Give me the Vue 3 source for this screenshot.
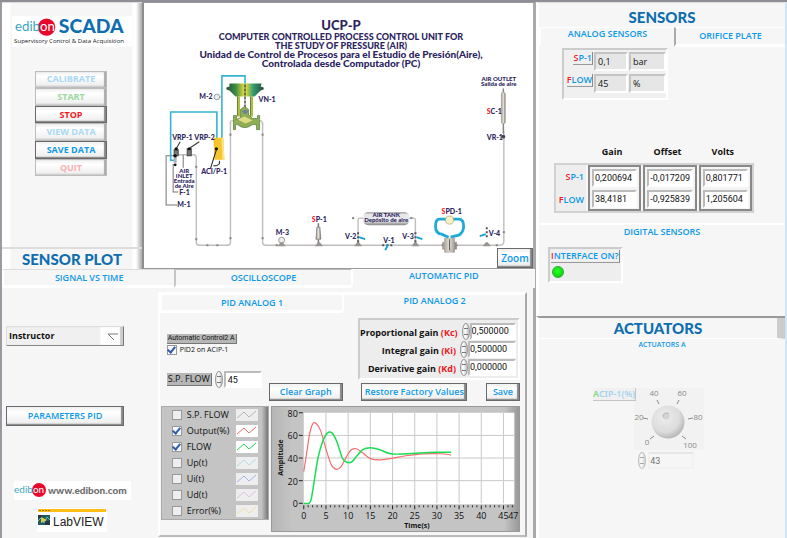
<script setup>
import { ref } from 'vue'

const commands = [
  { text: 'CALIBRATE', tone: 'sky' },
  { text: 'START', tone: 'green' },
  { text: 'STOP', tone: 'red', active: true },
  { text: 'VIEW DATA', tone: 'sky' },
  { text: 'SAVE DATA', tone: 'blue', active: true },
  { text: 'QUIT', tone: 'pink' },
]

const heading = [
  { y: 30, size: 13, text: 'UCP-P' },
  { y: 40, size: 9, text: 'COMPUTER CONTROLLED PROCESS CONTROL UNIT FOR' },
  { y: 49, size: 9, text: 'THE STUDY OF PRESSURE (AIR)' },
  { y: 58, size: 10, text: 'Unidad de Control de Procesos para el Estudio de Presión(Aire),' },
  { y: 67, size: 10, text: 'Controlada desde Computador (PC)' },
]

const tags = [
  { x: 199, y: 99, text: 'M-2' },
  { x: 258, y: 101, text: 'VN-1' },
  { x: 172, y: 139, text: 'VRP-1' },
  { x: 194, y: 139, text: 'VRP-2' },
  { x: 201, y: 173, text: 'ACI/P-1' },
  { x: 179, y: 194, text: 'F-1' },
  { x: 177, y: 206, text: 'M-1' },
  { x: 275, y: 234, text: 'M-3' },
  { x: 344, y: 238, text: 'V-2' },
  { x: 382, y: 242, text: 'V-1' },
  { x: 401, y: 238, text: 'V-3' },
  { x: 487, y: 235, text: 'V-4' },
  { x: 485, y: 139, text: 'VR-1' },
]
const sensorTags = [
  { x: 311, y: 221, head: 'S', tail: 'P-1' },
  { x: 440, y: 213, head: 'S', tail: 'PD-1' },
  { x: 485, y: 113, head: 'S', tail: 'C-1' },
]
const joints = [
  [230, 134], [230, 237], [196, 166], [196, 238], [262, 134], [262, 237], [207, 244], [217, 244],
  [276, 244], [352, 217], [410, 217], [441, 244], [455, 244], [495, 244], [502, 231],
]

const readings = [
  { id: 'sp1', head: 'S', tail: 'P-1', value: '0,1', unit: 'bar' },
  { id: 'flow', head: 'F', tail: 'LOW', value: '45', unit: '%' },
]
const calibration = [
  { head: 'S', tail: 'P-1', values: ['0,200694', '-0,017209', '0,801771'] },
  { head: 'F', tail: 'LOW', values: ['38,4181', '-0,925839', '1,205604'] },
]

const gains = ref([
  { id: 'kc', name: 'Proportional gain', code: '(Kc)', value: '0,500000' },
  { id: 'ki', name: 'Integral gain', code: '(Ki)', value: '0,500000' },
  { id: 'kd', name: 'Derivative gain', code: '(Kd)', value: '0,000000' },
])

const traces = ref([
  { text: 'S.P. FLOW', color: '#b5b5b5', on: false },
  { text: 'Output(%)', color: '#f46a6a', on: true },
  { text: 'FLOW', color: '#1fdc55', on: true },
  { text: 'Up(t)', color: '#b4dcec', on: false },
  { text: 'Ui(t)', color: '#9fb4ea', on: false },
  { text: 'Ud(t)', color: '#e0c0e6', on: false },
  { text: 'Error(%)', color: '#f3dca4', on: false },
])

const profile = ref('Instructor')
const pidOn = ref(true)
const setPoint = ref('45')
const output = ref('43')

const px = (t) => 32 + t * 4.47
const py = (v) => 97 - v * 1.14
const yTicks = [0, 20, 40, 60, 80]
const xTicks = [0, 5, 10, 15, 20, 25, 30, 35, 40, 45]
const minorTicks = Array.from({ length: 48 }, (_, i) => i)

function curve(points) {
  const p = points.map(([t, v]) => [px(t), py(v)])
  let d = `M${p[0][0]} ${p[0][1]}`
  for (let i = 0; i < p.length - 1; i++) {
    const a = p[i - 1] || p[i]
    const b = p[i]
    const c = p[i + 1]
    const e = p[i + 2] || c
    d += `C${b[0] + (c[0] - a[0]) / 6} ${b[1] + (c[1] - a[1]) / 6} ${c[0] - (e[0] - b[0]) / 6} ${c[1] - (e[1] - b[1]) / 6} ${c[0]} ${c[1]}`
  }
  return d
}
const outputCurve = curve([[0, 28], [0.6, 43], [1.3, 61], [2, 70], [2.8, 70.5], [3.8, 64], [5, 48], [6.2, 34], [7.3, 30], [8.4, 32.5], [9.6, 41], [10.8, 47.5], [12, 48], [13.6, 43.5], [15, 39.5], [17, 38.3], [19.5, 39.5], [23, 42], [27, 43.7], [31, 43.8], [33.2, 42.6]])
const flowCurve = curve([[0, 0], [1.2, 0], [1.7, 4], [2.4, 21], [3.2, 40], [4.2, 54], [5.3, 62], [6.4, 62], [7.5, 54], [8.7, 40], [9.6, 36.5], [10.8, 36.5], [12, 42], [13.3, 47.5], [15, 49], [17, 47.5], [19.5, 43.8], [22.5, 43.6], [26, 44.4], [30, 45], [33.2, 45]])
</script>

<template>
  <div class="app">
    <div class="workspace">
      <div class="upper">
        <aside class="sidebar">
          <svg class="brand" viewBox="0 0 118 30" role="img" aria-label="edibon SCADA">
            <rect width="118" height="30" fill="#fff" />
            <circle cx="34" cy="11" r="8.5" fill="#e8082c" />
            <text x="3" y="15" class="logo"><tspan fill="#39a6bd">edib</tspan><tspan fill="#fff">on</tspan></text>
            <text x="46" y="17" class="scada">SCADA</text>
            <text x="2" y="27" class="tagline">Supervisory Control &amp; Data Acquisition</text>
          </svg>
          <nav class="commands">
            <button v-for="c in commands" :key="c.text" type="button" class="bevel command" :class="[c.tone, { active: c.active }]">{{ c.text }}</button>
          </nav>
          <h2 class="title plot-title">SENSOR PLOT</h2>
        </aside>

        <main class="process">
          <svg class="diagram" viewBox="144 3 387 264">
            <defs>
              <linearGradient id="dome" x1="0" x2="1">
                <stop offset="0" stop-color="#28503a" /><stop offset=".25" stop-color="#3d8d45" />
                <stop offset=".5" stop-color="#f0e13c" /><stop offset=".72" stop-color="#349c70" /><stop offset="1" stop-color="#224b3c" />
              </linearGradient>
              <linearGradient id="metal" x1="0" x2="1">
                <stop offset="0" stop-color="#999188" /><stop offset=".5" stop-color="#e6e2dc" /><stop offset="1" stop-color="#807a74" />
              </linearGradient>
              <linearGradient id="tank" x1="0" x2="0" y1="0" y2="1">
                <stop offset="0" stop-color="#aaa" /><stop offset=".3" stop-color="#eee" /><stop offset=".7" stop-color="#ddd" /><stop offset="1" stop-color="#888" />
              </linearGradient>
            </defs>

            <text v-for="h in heading" :key="h.y" x="340" :y="h.y" :font-size="h.size" class="heading">{{ h.text }}</text>

            <g fill="none" stroke="#c0bebe" stroke-width="1.4">
              <path d="M230 122V241Q230 244 227 244H199Q196 244 196 241V157Q196 154 193 154H176" />
              <path d="M262 122V241Q262 244 265 244H498Q502 244 502 240V130" />
              <path d="M230 124V121Q230 120 233 120M259 120Q262 120 262 124" />
              <path d="M357 244V219Q357 217 359 217H412Q414 217 414 219V244" />
            </g>
            <g fill="#8b8585"><rect v-for="(j, i) in joints" :key="i" :x="j[0] - 1" :y="j[1] - 1" width="2" height="2" /></g>
            <path d="M176 155H166V204H177M176 164H173V191H178M183 154V167" fill="none" stroke="#77777b" />
            <g fill="none" stroke="#32b4d0" stroke-width="1.6">
              <path d="M221.500 138V75.500H244.500V84" />
              <path d="M216.500 138V111.500H170.500V159.500H174" />
            </g>

            <path d="M238 96V116M251 96V116" stroke="#b3bd42" stroke-width="3" />
            <path d="M237 96V115M250 96V115" stroke="#5b8741" stroke-width="1" />
            <path d="M229 83H261L260 86L263 87V89L260 90L254 96H235L229 90L226 89V87L229 86Z" fill="url(#dome)" />
            <path d="M244.500 84V108" stroke="#444d49" stroke-width="1.500" stroke-dasharray="3 1" />
            <path d="M240 109L244 106L248 109V114L252 118H257V115H259V129H256V124H252Q244 130 237 124H235V129H233V115H236V119L240 117Z" fill="#8fad55" stroke="#557b3b" stroke-width=".7" />
            <path d="M237 119L244 116L252 120L245 123Z" fill="#e0da83" />
            <path d="M245 109L248 111L245 114L241 111Z" fill="#6a8595" />

            <path d="M213 137H223L224 159H214Z" fill="#f6c52e" />
            <path d="M221 137H223L224 159H222Z" fill="#fbe58a" />
            <path d="M216 149L210 168M219 160V163L216 165H213" fill="none" stroke="#222" />
            <circle cx="216" cy="148" r="1.600" fill="#111" />
            <path d="M174 149H178V155H174ZM187 148H191V155H187Z" fill="#777" stroke="#444" />
            <path d="M175 153V162" stroke="#aab0bd" stroke-width="3" />
            <path d="M180 141L176 148M199 141L190 147" stroke="#333" />
            <g fill="#111"><circle cx="176" cy="148" r="1.600" /><circle cx="189" cy="148" r="1.600" /><circle cx="175" cy="155" r="1.800" /><circle cx="175" cy="164" r="1.400" /></g>

            <g fill="#eee" stroke="#888" stroke-width=".8">
              <circle cx="216.500" cy="96.500" r="2.800" /><path d="M219.500 96.500H221" />
              <circle cx="281" cy="239" r="3" /><path d="M281 242V244" />
            </g>
            <path d="M316 226H319L320 238H315Z" fill="url(#metal)" stroke="#777" stroke-width=".7" />
            <path d="M317.500 222V226M317.500 238V243" stroke="#777" stroke-width="1.500" />
            <g fill="#9a9491"><path v-for="x in [281, 318, 357, 414, 485]" :key="x" :d="`M${x - 4} 245L${x - 1} 241H${x + 1}L${x + 4} 245Z`" /></g>

            <rect x="362" y="211" width="46" height="13" rx="5" fill="url(#tank)" />
            <rect x="363" y="213" width="44" height="8" fill="#e9e9ec" />
            <g stroke="#555" stroke-width="2" stroke-dasharray="2 2"><path d="M357 231V241M414 231V241M485 226V238M381 244H391" /></g>
            <g stroke="#13a5d5" stroke-width="1.800"><path d="M358 236L364 238M415 236L421 238M478 235L484 233M387 243L384 249" /></g>

            <path d="M447 218H438Q434 218 434 225Q434 232 440 233L447 236M449 236L457 234Q462 231 462 225Q462 218 457 218H449" fill="none" stroke="#1fabd7" stroke-width="2.800" />
            <circle cx="448" cy="219" r="4" fill="#f6f2c4" stroke="#aaa079" stroke-width=".7" />
            <path d="M443 237H453V241H455V248H453V251H449V248H448V251H443V248H441V241H443Z" fill="url(#metal)" stroke="#99928c" stroke-width=".5" />
            <path d="M448 238V249" stroke="#5f5b59" />

            <rect x="499.500" y="92" width="4" height="31" rx="1.500" fill="url(#metal)" stroke="#99938d" stroke-width=".5" />
            <path d="M501.500 88V92M501.500 123V133" stroke="#888" stroke-width="1.500" />
            <circle cx="501.500" cy="136" r="1.900" fill="#444" />

            <text v-for="t in tags" :key="t.text" :x="t.x" :y="t.y" class="tag">{{ t.text }}</text>
            <text v-for="t in sensorTags" :key="t.tail" :x="t.x" :y="t.y" class="tag"><tspan fill="#ef1f2d">{{ t.head }}</tspan>{{ t.tail }}</text>
            <g class="note">
              <text x="184" y="172">AIR</text><text x="184" y="177">INLET</text>
              <text x="184" y="182">Entrada</text><text x="184" y="187">de Aire</text>
              <text x="385" y="216">AIR TANK</text><text x="385" y="221">Depósito de aire</text>
              <text x="497" y="81">AIR OUTLET</text><text x="497" y="86">Salida de aire</text>
            </g>
          </svg>
          <button type="button" class="bevel active zoom">Zoom</button>
        </main>
      </div>

      <div class="tabs main-tabs" role="tablist">
        <button type="button" role="tab" class="tab">SIGNAL VS TIME</button>
        <button type="button" role="tab" class="tab">OSCILLOSCOPE</button>
        <button type="button" role="tab" class="tab current" aria-selected="true">AUTOMATIC PID</button>
      </div>

      <div class="lower">
        <section class="plot-side">
          <div class="picker">
            <select v-model="profile" aria-label="Profile">
              <option>Instructor</option>
            </select>
            <svg viewBox="0 0 12 8"><path d="M11 1H1L7 7" fill="none" stroke="#777" /></svg>
          </div>
          <button type="button" class="bevel active parameters">PARAMETERS PID</button>
          <svg class="website" viewBox="0 0 117 19">
            <rect width="117" height="19" fill="#fff" />
            <circle cx="25" cy="9" r="7" fill="#e8082c" />
            <text x="0" y="12" class="logo-small"><tspan fill="#39a6bd">edib</tspan><tspan fill="#fff">on</tspan></text>
            <text x="34" y="13" class="address">www.edibon.com</text>
          </svg>
          <svg class="labview" viewBox="0 0 70 24">
            <rect width="70" height="24" fill="#fff" />
            <rect x="1" y="1" width="68" height="3" fill="#ffbd16" />
            <path d="M2 2.500H14" stroke="#a67810" stroke-dasharray="2 1" />
            <rect x="1" y="7" width="12" height="10" fill="#1d5c5a" />
            <path d="M1 7H5V10H1ZM8 13H13V17H8Z" fill="#273746" />
            <path d="M4 9L10 12L4 15Z" fill="#f4c72c" />
            <path d="M1 13L4 10L7 15L10 9L13 12" fill="none" stroke="#7fd1c5" stroke-width=".8" />
            <text x="16" y="18" class="labview-name">LabVIEW</text>
          </svg>
        </section>

        <section class="pid">
          <div class="tabs pid-tabs" role="tablist">
            <button type="button" role="tab" class="tab">PID ANALOG 1</button>
            <button type="button" role="tab" class="tab current" aria-selected="true">PID ANALOG 2</button>
          </div>

          <div class="controls">
            <div class="auto">
              <span class="chip">Automatic Control2 A</span>
              <label class="check"><input v-model="pidOn" type="checkbox" />PID2 on ACIP-1</label>
              <div class="setpoint">
                <label for="setpoint" class="chip large">S.P. FLOW</label>
                <span class="spin"></span>
                <input id="setpoint" v-model="setPoint" class="number" />
              </div>
            </div>
            <div class="tuning">
              <div class="gains">
                <div v-for="g in gains" :key="g.id" class="gain">
                  <label :for="g.id">{{ g.name }} <em>{{ g.code }}</em></label>
                  <span class="spin"></span>
                  <input :id="g.id" v-model="g.value" class="number" />
                </div>
              </div>
              <div class="actions">
                <button type="button" class="bevel active clear">Clear Graph</button>
                <button type="button" class="bevel active restore">Restore Factory Values</button>
                <button type="button" class="bevel active save">Save</button>
              </div>
            </div>
          </div>

          <div class="charts">
            <div class="legend">
              <label v-for="t in traces" :key="t.text" class="trace">
                <input v-model="t.on" type="checkbox" />
                <span>{{ t.text }}</span>
                <svg viewBox="0 0 22 12" :class="{ lit: t.on }"><path d="M1 9L8 3L13 8L20 2" fill="none" :stroke="t.color" /></svg>
              </label>
            </div>
            <svg class="graph" viewBox="0 0 249 125">
              <rect :x="px(0)" :y="py(80)" :width="px(47) - px(0) + 2" :height="py(0) - py(80) + 1" fill="#fff" />
              <g stroke="#c9c9c9" stroke-width="1">
                <line v-for="v in [20, 40, 60]" :key="'h' + v" :x1="px(0)" :x2="px(47) + 2" :y1="py(v)" :y2="py(v)" />
                <line v-for="t in xTicks.slice(1)" :key="'v' + t" :x1="px(t)" :x2="px(t)" :y1="py(80)" :y2="py(0)" />
              </g>
              <g stroke="#222">
                <line v-for="v in yTicks" :key="'y' + v" x1="27" x2="31" :y1="py(v)" :y2="py(v)" />
                <line v-for="t in minorTicks" :key="'m' + t" :x1="px(t)" :x2="px(t)" y1="99" :y2="t % 5 ? 101 : 103" />
              </g>
              <g class="axis">
                <text v-for="v in yTicks" :key="v" x="26" :y="py(v) + 4" text-anchor="end">{{ v }}</text>
                <text v-for="t in xTicks" :key="t" :x="px(t)" y="113" text-anchor="middle">{{ t }}</text>
                <text x="243" y="113" text-anchor="middle">47</text>
              </g>
              <text x="146" y="122" text-anchor="middle" class="axis-name">Time(s)</text>
              <text x="-51" y="11" transform="rotate(-90)" text-anchor="middle" class="axis-name">Amplitude</text>
              <path :d="outputCurve" fill="none" stroke="#f36e70" stroke-width="1.200" />
              <path :d="flowCurve" fill="none" stroke="#18df52" stroke-width="1.500" />
            </svg>
          </div>
        </section>
      </div>
    </div>

    <div class="devices">
      <section class="sensors">
        <h2 class="title">SENSORS</h2>
        <div class="tabs sensor-tabs" role="tablist">
          <button type="button" role="tab" class="tab current" aria-selected="true">ANALOG SENSORS</button>
          <button type="button" role="tab" class="tab">ORIFICE PLATE</button>
        </div>
        <div class="readings">
          <div v-for="r in readings" :key="r.id" class="reading">
            <label :for="r.id" class="plate"><em>{{ r.head }}</em>{{ r.tail }}</label>
            <input :id="r.id" :value="r.value" readonly />
            <input :value="r.unit" :aria-label="r.tail + ' unit'" readonly />
          </div>
        </div>
        <table class="calibration">
          <thead>
            <tr><td></td><th scope="col">Gain</th><th scope="col">Offset</th><th scope="col">Volts</th></tr>
          </thead>
          <tbody>
            <tr v-for="c in calibration" :key="c.tail">
              <th scope="row"><em>{{ c.head }}</em>{{ c.tail }}</th>
              <td v-for="v in c.values" :key="v"><span>{{ v }}</span></td>
            </tr>
          </tbody>
        </table>
      </section>

      <section class="digital">
        <h3 class="subtitle">DIGITAL SENSORS</h3>
        <div class="interface">
          <span class="plate"><em>I</em>NTERFACE ON?</span>
          <span class="led"></span>
        </div>
      </section>

      <section class="actuators">
        <h2 class="title">ACTUATORS</h2>
        <h3 class="subtitle small">ACTUATORS A</h3>
        <div class="valve">
          <label for="acip" class="plate faded"><em>A</em>CIP-1(%)</label>
          <div class="dial">
            <svg viewBox="0 0 70 64">
              <defs>
                <radialGradient id="knob" cx=".4" cy=".35" r=".65">
                  <stop offset="0" stop-color="#ededed" /><stop offset=".7" stop-color="#dcdcdc" /><stop offset="1" stop-color="#b9b9b9" />
                </radialGradient>
              </defs>
              <rect width="70" height="62" fill="#f2f2f2" />
              <circle cx="34" cy="34" r="16.500" fill="url(#knob)" />
              <circle cx="32" cy="28" r="3.500" fill="#d2d2d2" /><path d="M29 29A3.500 3.500 0 0 1 35 26" stroke="#bbb" fill="none" />
              <path d="M25 16L23 12M43 16L45 12M14 31L9 30M54 31L59 30M20 48L16 51M48 48L52 51" stroke="#8a8a8a" />
              <g class="scale">
                <text x="20" y="8">40</text><text x="48" y="8">60</text><text x="5" y="32">20</text>
                <text x="64" y="32">80</text><text x="13" y="57">0</text><text x="56" y="60">100</text>
              </g>
            </svg>
            <div class="dial-value">
              <span class="spin"></span>
              <input id="acip" v-model="output" class="number" />
            </div>
          </div>
        </div>
      </section>
    </div>
  </div>
</template>

<style>
body { background: #f6f6f6; }
</style>

<style scoped>
* { box-sizing: border-box; }
.app {
  display: grid;
  grid-template-columns: 535fr 252fr;
  min-height: 100vh;
  background: #f6f6f6;
  border-top: 2px solid #8e8e94;
  font-family: "Open Sans", "Noto Sans", sans-serif;
  font-size: 9px;
  line-height: 12px;
  color: #111;
}
svg { display: block; }
input, select, button { font: inherit; color: inherit; margin: 0; padding: 0; border-radius: 0; min-width: 0; }
em { font-style: normal; color: #f01822; }
h2, h3 { margin: 0; }

.title {
  font-family: Lato, "Open Sans", sans-serif;
  font-size: 15px;
  font-weight: 900;
  line-height: 20px;
  color: #0e6eb0;
  text-align: center;
}
.subtitle { font-size: 9px; font-weight: 600; line-height: 12px; color: #0d98ea; text-align: center; }
.subtitle.small { font-size: 7px; }

.bevel {
  border: 1px solid #bcbcbc;
  background: linear-gradient(#f1f1f1, #fff 30%, #f0f0f0 85%, #ccc);
  box-shadow: inset -2px 0 1px #aaa;
  color: #0d98ea;
  font-weight: 600;
  text-align: center;
  white-space: nowrap;
}
.bevel.active { border-color: #69696c; box-shadow: inset -2px -1px 1px #888; }

.workspace { display: flex; flex-direction: column; border-left: 2px solid #9a9aa0; min-width: 0; }
.upper { display: grid; grid-template-columns: 140fr 393fr; }
.sidebar {
  display: flex;
  flex-direction: column;
  padding: 13px 10px 0 10px;
  background: linear-gradient(90deg, #fff 8px, #f6f6f6 9px calc(100% - 10px), #fff calc(100% - 9px) calc(100% - 6px), #aaa);
  border-top: 1px solid #ddd;
}
.brand { width: 100%; }
.commands { display: grid; grid-auto-rows: 1fr; height: 106px; width: 72px; margin: 24px 0 0 23px; }
.command.command { font-size: 9px; font-weight: 700; }
.bevel.sky { color: #a9d8f7; }
.bevel.green { color: #9bdb9d; }
.bevel.red { color: #f01822; }
.bevel.pink { color: #f8b0b2; }
.plot-title { margin: auto -10px 0; border-top: 2px solid #ddd; }

.process { position: relative; background: #fff; border: 1px solid #999; border-left: 2px solid #8d8d92; border-right: 2px solid #aaa; }
.diagram { width: 100%; }
.zoom { position: absolute; right: 0; bottom: 0; width: 36px; height: 20px; font-size: 10px; }

.logo { font-family: Lato, sans-serif; font-size: 13px; }
.logo-small { font-family: Lato, sans-serif; font-size: 10px; }
.scada { font-family: Lato, sans-serif; font-size: 19px; font-weight: 900; fill: #0e6eb0; }
.tagline { font-size: 6px; fill: #222; }
.address { font-family: Lato, sans-serif; font-size: 10px; font-weight: 900; fill: #6d6d70; }
.labview-name { font-family: "Liberation Sans", sans-serif; font-size: 12px; fill: #222; }
.heading { font-family: Lato, sans-serif; font-weight: 900; fill: #2c2560; text-anchor: middle; }
.tag { font-family: Lato, sans-serif; font-size: 7px; font-weight: 900; fill: #2c2560; }
.note text { font-family: Lato, sans-serif; font-size: 6px; font-weight: 900; fill: #2c2560; text-anchor: middle; }

.tabs { display: grid; }
.tab {
  border: 0;
  border-top: 1px solid #bbb;
  border-left: 2px solid #c4c4c4;
  border-bottom: 3px solid #fff;
  background: transparent;
  color: #0d98ea;
  font-weight: 600;
}
.tab:first-child { border-left-color: #fff; }
.tab.current { border-top-color: #fff; border-left-color: #fff; border-bottom-color: transparent; padding-bottom: 3px; }
.main-tabs { grid-template-columns: 172fr 176fr 184fr; height: 19px; }
.main-tabs .tab:first-child { border-top-color: #ddd; }

.lower { display: grid; grid-template-columns: 156fr 370fr; flex: 1; padding: 4px 6px 1px 0; border-right: 2px solid #aaa; }
.plot-side { display: flex; flex-direction: column; align-items: flex-start; padding: 34px 0 0 4px; }
.picker { position: relative; width: 118px; height: 20px; }
.picker select {
  appearance: none;
  width: 100%;
  height: 100%;
  padding-left: 2px;
  border: 1px solid #ddd;
  border-right: 1px solid #777;
  border-bottom: 1px solid #888;
  background: linear-gradient(90deg, #f0f0f0 80%, #fff 81%);
  box-shadow: inset -3px 0 1px #ccc;
  font-weight: 700;
}
.picker svg { position: absolute; right: 5px; top: 7px; width: 12px; height: 8px; pointer-events: none; }
.parameters { width: 118px; height: 20px; margin-top: 60px; }
.website { width: 117px; margin: 55px 0 0 8px; }
.labview { width: 70px; margin: 8px 0 0 31px; }

.pid { border: 2px solid #fff; border-right: 2px solid #aaa; border-bottom: 2px solid #bbb; padding-right: 5px; min-width: 0; }
.pid-tabs { grid-template-columns: 1fr 1fr; height: 18px; margin-right: -5px; }
.pid-tabs .tab { border-top: 1px solid #fff; border-left-color: #fff; }
.controls { display: grid; grid-template-columns: 109px 1fr; }
.auto { padding: 22px 0 0 7px; display: flex; flex-direction: column; align-items: flex-start; }
.chip { background: #b6b6b6; border-right: 1px solid #777; border-bottom: 1px solid #777; font-family: Roboto, sans-serif; font-size: 7px; line-height: 9px; padding: 0 1px; white-space: nowrap; }
.chip.large { font-family: inherit; font-size: 9px; line-height: 12px; }
.check { display: flex; align-items: center; gap: 3px; margin-top: 1px; font-size: 7px; line-height: 10px; }
input[type="checkbox"] {
  appearance: none;
  flex: none;
  width: 10px;
  height: 10px;
  border: 1px solid #999;
  background: #eee;
  display: grid;
  place-items: center;
}
input[type="checkbox"]:checked { background: #f4f8ff; }
input[type="checkbox"]:checked::after { content: ""; width: 3px; height: 6px; border: solid #2f5ba8; border-width: 0 2px 2px 0; rotate: 40deg; translate: 0 -1px; }
.setpoint { display: flex; align-items: center; margin-top: 16px; }
.spin {
  flex: none;
  width: 8px;
  height: 17px;
  border: 1px solid #999;
  border-radius: 50%;
  background:
    linear-gradient(#777, #777) center 4px / 4px 1px no-repeat,
    linear-gradient(#777, #777) center 10px / 4px 1px no-repeat,
    linear-gradient(90deg, #ddd, #fff 40%, #bbb);
}
.setpoint .spin { margin-left: 3px; }
.number { width: 46px; height: 17px; border: 2px solid #fff; border-top-color: #bbb; border-left-color: #bbb; background: #fff; font-family: Roboto, sans-serif; line-height: 13px; }
.setpoint .number { width: 38px; margin-left: 1px; padding-left: 2px; }
.tuning { display: flex; flex-direction: column; align-items: stretch; min-width: 0; }
.gains { align-self: flex-end; width: 162px; margin-top: 6px; padding: 2px 2px 2px 0; border: 2px solid #ccc; border-right-color: #fff; border-bottom-color: #fff; background: #ededed; }
.gain { display: flex; align-items: center; justify-content: flex-end; height: 18px; }
.gain label { padding: 3px 4px 0 0; font-weight: 700; white-space: nowrap; }
.gain .number { width: 48px; }
.actions { display: flex; justify-content: space-between; margin-top: 3px; }
.actions .bevel { height: 18px; }
.actions .clear { width: 74px; }
.actions .restore { width: 106px; }
.actions .save { width: 34px; }
.charts { display: grid; grid-template-columns: 108fr 249fr; gap: 2px; align-items: start; margin-top: 5px; padding-left: 1px; }
.legend { padding: 0 10px 0 10px; background: linear-gradient(90deg, #c4c4c4 94%, #777); border: 1px solid #aaa; }
.trace { display: grid; grid-template-columns: 10px 1fr 22px; align-items: center; gap: 5px; height: 16px; white-space: nowrap; }
.trace svg { width: 22px; height: 12px; background: #eee; }
.trace svg.lit { background: #fff; }
.graph { width: 100%; background: linear-gradient(90deg, #b5b5b5, #c4c4c4 20px 94%, #999); border: 1px solid #999; }
.axis text { font-size: 9px; fill: #111; }
.axis-name { font-size: 7px; font-weight: 700; fill: #111; }

.devices { display: flex; flex-direction: column; border-left: 1px solid #aaa; border-right: 2px solid #d4e3f3; min-width: 0; }
.sensors { display: flex; flex-direction: column; border-left: 3px solid #fff; border-top: 1px solid #ddd; height: 221px; }
.sensors .title { padding-top: 4px; line-height: 20px; }
.sensor-tabs { grid-template-columns: 135fr 111fr; height: 20px; }
.sensor-tabs .tab { border-top: 1px solid #fff; padding: 0; }
.sensor-tabs .tab.current { padding-bottom: 4px; }
.sensor-tabs .tab:last-child { border-left-color: #aaa; }
.readings { width: 106px; margin: 1px 0 0 23px; padding: 2px 0 2px; border: 2px solid #ccc; border-right-color: #fff; border-bottom-color: #fff; background: #f0f0f0; }
.reading { display: grid; grid-template-columns: 29px 34px 37px; gap: 1px; align-items: start; justify-items: end; height: 22px; }
.reading input { width: 100%; height: 19px; padding-left: 2px; border: 2px solid #fff; border-top-color: #c4c4c4; border-left-color: #c4c4c4; background: #e6e6e6; }
.plate { color: #0d98ea; font-weight: 600; line-height: 12px; background: #f0f0f0; border-right: 1px solid #888; border-bottom: 1px solid #999; white-space: nowrap; }
.calibration { width: 200px; margin: 46px 0 0 15px; border-collapse: separate; border-spacing: 2px 0; table-layout: fixed; }
.calibration td, .calibration th { padding: 0; }
.calibration thead td { width: 30px; }
.calibration thead th { font-weight: 700; height: 19px; line-height: 12px; vertical-align: top; padding-right: 5px; }
.calibration tbody { outline: 2px solid #d2d2d2; background: #eee; }
.calibration tbody th { color: #0d98ea; font-weight: 600; text-align: right; padding-right: 2px; }
.calibration tbody td { height: 23px; border: solid #888; border-width: 0 2px; background: #f4f4f4; padding: 1px 2px; }
.calibration tbody tr:first-child td { border-top-width: 2px; }
.calibration tbody tr:last-child td { border-bottom-width: 2px; }
.calibration span { display: block; height: 18px; padding-left: 1px; line-height: 15px; border: 2px solid #fff; border-top-color: #bbb; border-left-color: #bbb; background: #fff; font-family: Roboto, sans-serif; }

.digital { border-left: 3px solid #fff; border-top: 2px solid #fff; height: 93px; }
.digital .subtitle { padding-top: 1px; }
.interface { display: inline-flex; flex-direction: column; align-items: flex-start; margin: 9px 0 0 9px; padding: 1px; height: 36px; border: 2px solid #ccc; border-right-color: #fff; border-bottom-color: #fff; background: #eee; }
.led { width: 12px; height: 12px; margin: 3px 0 0 1px; border: 1px solid #3aa23a; border-radius: 50%; background: radial-gradient(circle at 45% 40%, #2bff2b, #0ce20c 60%, #0ba80b); }

.actuators { flex: 1; border-left: 3px solid #fff; border-top: 2px solid #999; }
.actuators .title { border-right: 8px solid #ccc; border-bottom: 1px solid #fff; }
.valve { display: flex; align-items: flex-start; margin: 37px 0 0 54px; }
.faded { position: relative; z-index: 1; font-family: "Noto Sans", sans-serif; color: #a5d2ef; border-color: #c5c5c5; }
.faded em { color: #82d982; }
.dial svg { width: 70px; }
.dial { margin-left: -2px; }
.scale text { font-size: 8px; fill: #8a8a8a; text-anchor: middle; }
.dial-value { display: flex; gap: 2px; margin-left: 4px; opacity: .6; }
.dial-value .number { background: transparent; border-color: #f1f1f1; border-top-color: #ddd; }
</style>
